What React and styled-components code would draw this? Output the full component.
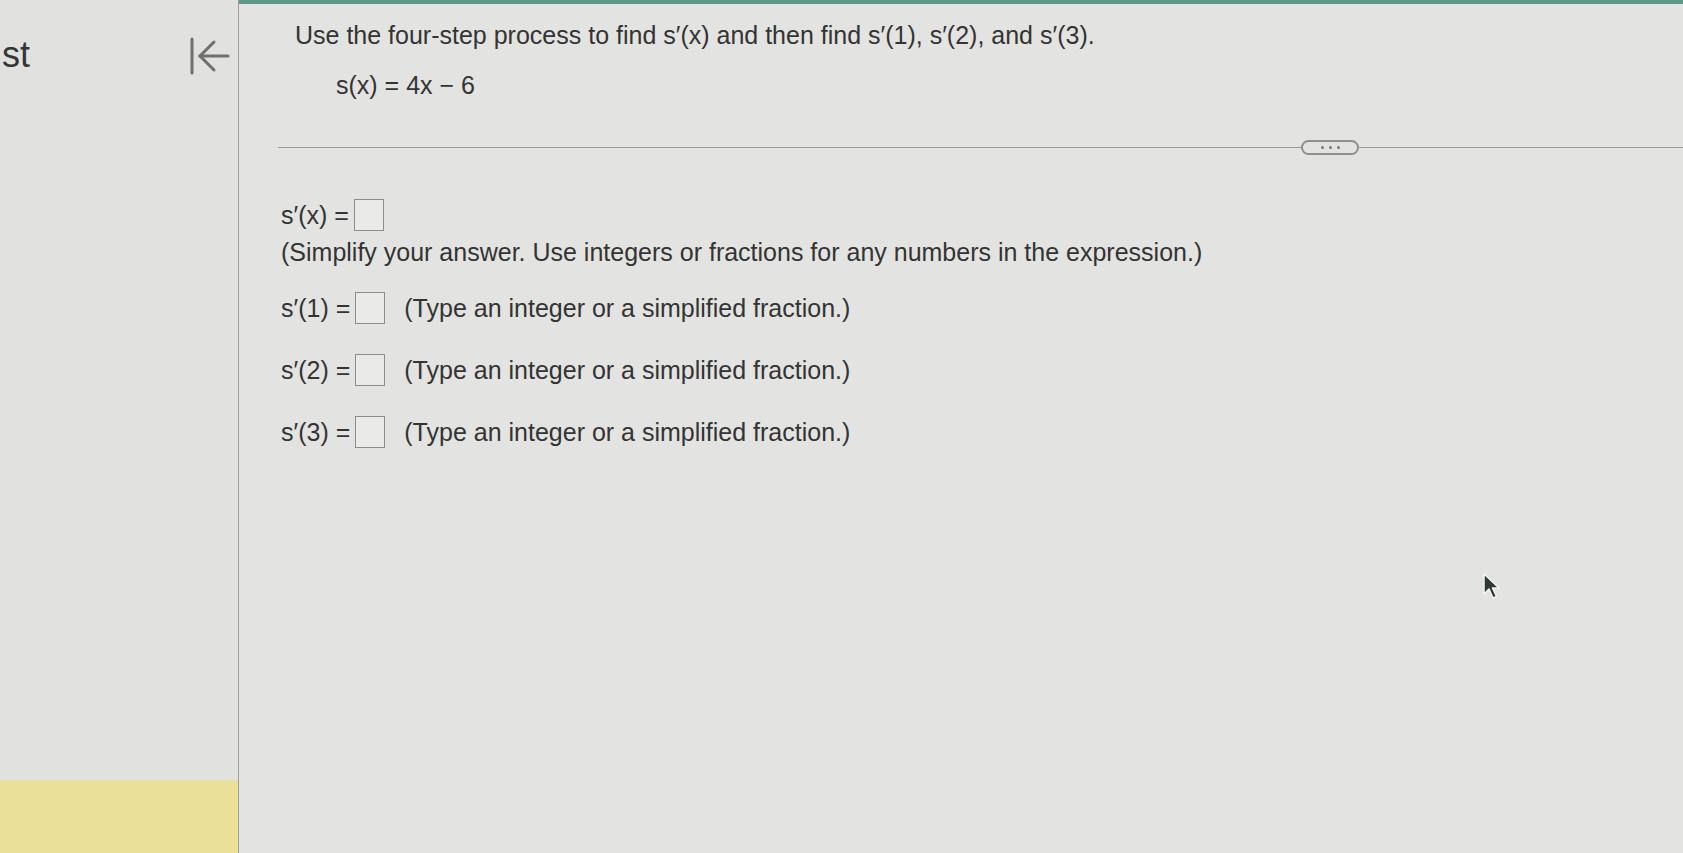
import { styled, createGlobalStyle } from 'styled-components';

const GlobalStyle = createGlobalStyle`
  html, body {
    margin: 0;
    padding: 0;
    height: 100%;
    background: #e3e3e1;
  }
  #root {
    height: 100%;
  }
`;

const rows = ['1', '2', '3'];

const App = () => {
  return (
    <>
      <GlobalStyle />
      <Page>
        <Sidebar>
          <SideTop>
            <Cut>st</Cut>
            <BackButton aria-label='back'>
              <svg width='42' height='40' viewBox='0 0 42 40'>
                <g stroke='#6e706e' strokeWidth='3' fill='none' strokeLinecap='round'>
                  <line x1='4' y1='3' x2='4' y2='37' />
                  <line x1='12' y1='20' x2='40' y2='20' />
                  <polyline points='26,6 12,20 26,34' />
                </g>
              </svg>
            </BackButton>
          </SideTop>
          <Sticky />
        </Sidebar>
        <Main>
          <TopStrip />
          <Content>
            <Question>
              Use the four-step process to find s′(x) and then find s′(1), s′(2), and s′(3).
            </Question>
            <Given>s(x) = 4x − 6</Given>
            <Rule>
              <Line $w='1023px' />
              <Pill>
                <Dot />
                <Dot />
                <Dot />
              </Pill>
              <Line $w='auto' />
            </Rule>
            <Answers>
              <Field>
                <span>s′(x) =</span>
                <Box />
              </Field>
              <Hint>(Simplify your answer. Use integers or fractions for any numbers in the expression.)</Hint>
              {rows.map((n, i) => (
                <Field key={n} $top={i === 0 ? 25 : 30}>
                  <span>s′({n}) =</span>
                  <Box />
                  <Note>(Type an integer or a simplified fraction.)</Note>
                </Field>
              ))}
            </Answers>
          </Content>
          <Cursor>
            <svg width='22' height='28' viewBox='0 0 22 28'>
              <path
                d='M2 2 L2 22 L7 17 L11 26 L14.5 24.5 L10.5 16 L17 16 Z'
                fill='#2f3a38'
                stroke='#f4f4f2'
                strokeWidth='1.5'
                strokeLinejoin='round'
              />
            </svg>
          </Cursor>
        </Main>
      </Page>
    </>
  );
};

export default App;

const Page = styled.div`
  display: flex;
  height: 853px;
  overflow: hidden;
  font-family: 'Liberation Sans', Arial, sans-serif;
  color: #333433;
`;

const Sidebar = styled.aside`
  width: 238px;
  flex-shrink: 0;
  display: flex;
  flex-direction: column;
  background: #e1e2e0;
  border-right: 1.5px solid #9c9e9c;
`;

const SideTop = styled.div`
  display: flex;
  align-items: center;
  justify-content: space-between;
  padding: 34px 8px 0 2px;
`;

const Cut = styled.div`
  font-size: 36px;
  line-height: 40px;
  color: #343534;
`;

const BackButton = styled.div`
  display: flex;
  align-items: center;
  padding-top: 2px;
`;

const Sticky = styled.div`
  margin-top: auto;
  height: 73px;
  background: #ebe09a;
`;

const Main = styled.main`
  flex: 1;
  position: relative;
  display: flex;
  flex-direction: column;
`;

const TopStrip = styled.div`
  height: 4px;
  background: #5f9786;
`;

const Content = styled.div`
  padding: 16px 0 0 56px;
  font-size: 25px;
`;

const Question = styled.p`
  margin: 0;
  line-height: 30px;
`;

const Given = styled.p`
  margin: 20px 0 0 41px;
  line-height: 30px;
`;

const Rule = styled.div`
  display: flex;
  align-items: center;
  margin: 40px 0 0 -17px;
`;

const Line = styled.div`
  height: 1.5px;
  background: #9a9b99;
  width: ${(p) => p.$w};
  flex: ${(p) => (p.$w === 'auto' ? 1 : 'none')};
`;

const Pill = styled.div`
  width: 54px;
  height: 11px;
  border: 2px solid #8f908e;
  border-radius: 8px;
  display: flex;
  align-items: center;
  justify-content: center;
  gap: 5px;
`;

const Dot = styled.span`
  width: 3px;
  height: 3px;
  border-radius: 50%;
  background: #7a7b79;
`;

const Answers = styled.div`
  margin-top: 44px;
  margin-left: -14px;
`;

const Field = styled.div`
  display: flex;
  align-items: center;
  gap: 5px;
  line-height: 30px;
  margin-top: ${(p) => p.$top || 0}px;
`;

const Box = styled.span`
  width: 30px;
  height: 32px;
  border: 1.5px solid #8c8e8c;
  background: #eaebe9;
  box-sizing: border-box;
`;

const Note = styled.span`
  margin-left: 14px;
`;

const Hint = styled.p`
  margin: 6px 0 0;
  line-height: 30px;
`;

const Cursor = styled.div`
  position: absolute;
  left: 1243px;
  top: 572px;
`;
